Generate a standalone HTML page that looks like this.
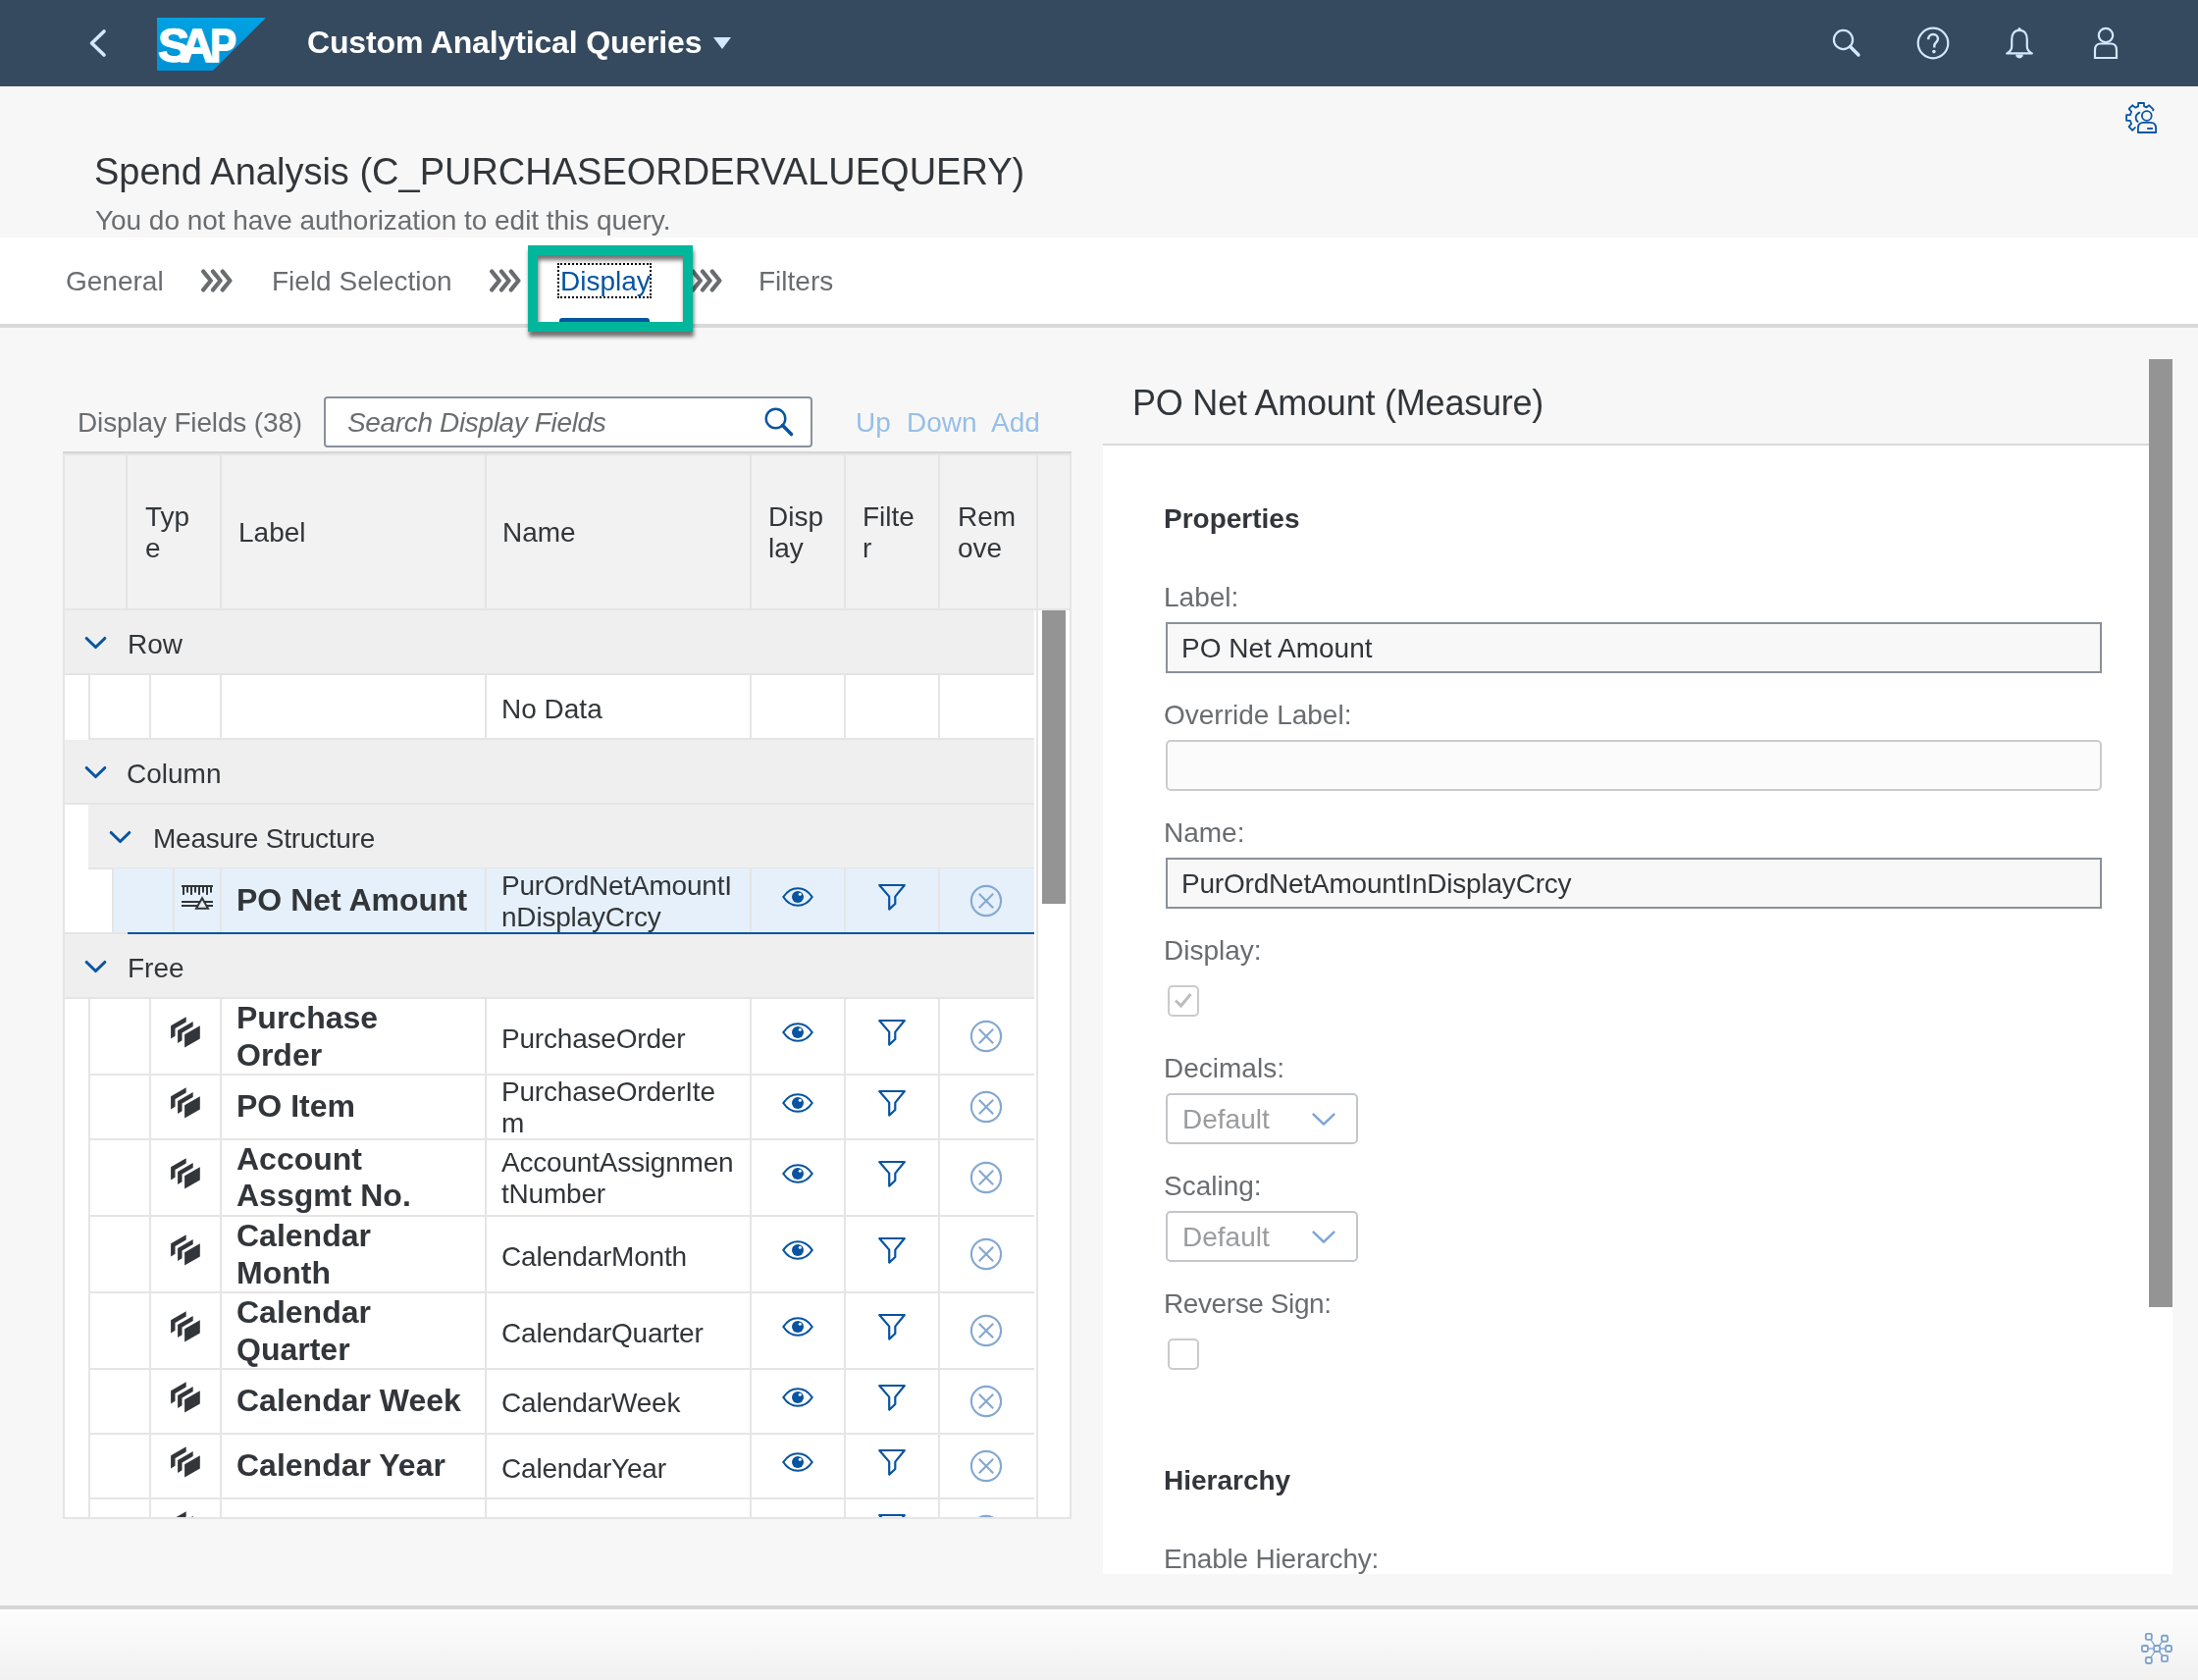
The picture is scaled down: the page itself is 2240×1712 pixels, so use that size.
<!DOCTYPE html><html><head><meta charset="utf-8"><style>
html,body{margin:0;padding:0;}
body{width:2240px;height:1712px;position:relative;overflow:hidden;background:#f7f7f7;font-family:"Liberation Sans",sans-serif;-webkit-font-smoothing:antialiased;}
.t{position:absolute;white-space:nowrap;will-change:transform;}
.b{position:absolute;}
</style></head><body>
<div class="b" style="left:0px;top:0px;width:2240px;height:88px;background:#354a5f"></div>
<svg class="b" style="left:88px;top:26px;" width="24" height="36" viewBox="0 0 24 36"><polyline points="18,6 5.5,18 18,30" fill="none" stroke="#d1e8ff" stroke-width="3.6" stroke-linecap="round" stroke-linejoin="round"/></svg>
<svg class="b" style="left:160px;top:18px;" width="111" height="54" viewBox="0 0 111 54"><defs><linearGradient id="sg" x1="0" y1="0" x2="0" y2="1"><stop offset="0" stop-color="#00a2e3"/><stop offset="1" stop-color="#0091d4"/></linearGradient></defs><polygon points="0,0 111,0 57,54 0,54" fill="url(#sg)"/><g font-family="Liberation Sans" font-weight="bold" font-size="48" fill="#fff" stroke="#fff" stroke-width="1.4"><text x="1" y="44.5">S</text><text x="23.5" y="44.5">A</text><text x="54" y="44.5" textLength="27" lengthAdjust="spacingAndGlyphs">P</text></g></svg>
<div class="t" style="left:313px;top:27px;font-size:32px;line-height:32px;color:#ffffff;font-weight:bold;font-style:normal;letter-spacing:-0.15px">Custom Analytical Queries</div>
<svg class="b" style="left:727px;top:38px;" width="18" height="12" viewBox="0 0 18 12"><polygon points="0,0 18,0 9,12" fill="#d1e8ff"/></svg>
<svg class="b" style="left:1866px;top:28px;" width="32" height="32" viewBox="0 0 32 32"><circle cx="12.5" cy="12.5" r="9.6" fill="none" stroke="#d1e8ff" stroke-width="2.2"/><line x1="19.5" y1="19.5" x2="28" y2="28" stroke="#d1e8ff" stroke-width="3.4" stroke-linecap="round"/></svg>
<svg class="b" style="left:1953px;top:27px;" width="34" height="34" viewBox="0 0 34 34"><circle cx="17" cy="17" r="15.3" fill="none" stroke="#d1e8ff" stroke-width="2.2"/><path d="M12.2,13.2 C12.2,9.8 14.5,8 17.1,8 C19.9,8 22,9.9 22,12.6 C22,15.6 18.3,16.6 18.3,19.6 L18.3,21.5" fill="none" stroke="#d1e8ff" stroke-width="2.4"/><circle cx="17.9" cy="25.6" r="1.8" fill="#d1e8ff"/></svg>
<svg class="b" style="left:2042px;top:27px;" width="32" height="34" viewBox="0 0 32 34"><path d="M16,3.8 C10.5,3.8 8.2,8.2 8.2,13.2 L8.2,20.5 C8.2,23.5 6.5,25.6 3.2,27.4 L28.8,27.4 C25.5,25.6 23.8,23.5 23.8,20.5 L23.8,13.2 C23.8,8.2 21.5,3.8 16,3.8 Z" fill="none" stroke="#d1e8ff" stroke-width="2.2" stroke-linejoin="round"/><circle cx="16" cy="2.6" r="1.6" fill="#d1e8ff"/><path d="M12.2,28.6 A3.8,3.8 0 0 0 19.8,28.6 Z" fill="#d1e8ff"/></svg>
<svg class="b" style="left:2132px;top:27px;" width="28" height="34" viewBox="0 0 28 34"><circle cx="14" cy="9" r="7.2" fill="none" stroke="#d1e8ff" stroke-width="2.2"/><path d="M3,32 L3,24 C3,19.5 5.5,17.5 9,17.5 L19,17.5 C22.5,17.5 25,19.5 25,24 L25,32 Z" fill="none" stroke="#d1e8ff" stroke-width="2.2"/></svg>
<svg class="b" style="left:2164px;top:102px;" width="36" height="36" viewBox="0 0 36 36"><g fill="none" stroke="#0854a0" stroke-width="1.8" stroke-linejoin="round" stroke-linecap="round"><path d="M11.9,28 L9.2,30.8 L5.6,27.1 L8.1,24.2 L6.9,20.8 L3.1,20.8 L3.1,15.1 L6.9,15.1 L8.1,11.8 L5.6,8.9 L9.2,5.3 L12.1,7.6 L15.1,6.3 L15.1,3 L21,3 L21,6.3 L23.6,7.3 L26.2,5.3 L30.6,9.6 L30.2,10.5"/><path d="M16.4,12.6 C13.8,14 12.6,16.2 12.6,18 C12.6,19.6 13.4,21 14.6,22"/><circle cx="23.8" cy="16" r="4.9"/><path d="M14.9,33 L14.9,28.5 C14.9,25 16.6,22.8 20.5,22.8 L27.5,22.8 C31.4,22.8 33.1,25 33.1,28.5 L33.1,33 Z"/></g><rect x="24.2" y="28" width="5.7" height="1.9" fill="#0854a0"/></svg>
<div class="t" style="left:96px;top:156px;font-size:38px;line-height:38px;color:#32363a;font-weight:normal;font-style:normal;">Spend Analysis (C_PURCHASEORDERVALUEQUERY)</div>
<div class="t" style="left:97px;top:211px;font-size:28px;line-height:28px;color:#6a6d70;font-weight:normal;font-style:normal;letter-spacing:-0.04px">You do not have authorization to edit this query.</div>
<div class="b" style="left:0px;top:242px;width:2240px;height:88px;background:#ffffff"></div>
<div class="b" style="left:0px;top:330px;width:2240px;height:4px;background:#d9d9d9"></div>
<div class="t" style="left:67px;top:273px;font-size:28px;line-height:28px;color:#6a6d70;font-weight:normal;font-style:normal;">General</div>
<div class="t" style="left:277px;top:273px;font-size:28px;line-height:28px;color:#6a6d70;font-weight:normal;font-style:normal;">Field Selection</div>
<div class="t" style="left:571px;top:273px;font-size:28px;line-height:28px;color:#0854a0;font-weight:normal;font-style:normal;">Display</div>
<div class="t" style="left:773px;top:273px;font-size:28px;line-height:28px;color:#6a6d70;font-weight:normal;font-style:normal;">Filters</div>
<svg class="b" style="left:204px;top:274px;" width="34" height="24" viewBox="0 0 34 24"><polyline points="3.2,2.6 10.8,12 3.2,21.4" fill="none" stroke="#6a6d70" stroke-width="4.3" stroke-linecap="round" stroke-linejoin="round"/><polyline points="13.0,2.6 20.6,12 13.0,21.4" fill="none" stroke="#6a6d70" stroke-width="4.3" stroke-linecap="round" stroke-linejoin="round"/><polyline points="22.8,2.6 30.400000000000002,12 22.8,21.4" fill="none" stroke="#6a6d70" stroke-width="4.3" stroke-linecap="round" stroke-linejoin="round"/></svg>
<svg class="b" style="left:498px;top:274px;" width="34" height="24" viewBox="0 0 34 24"><polyline points="3.2,2.6 10.8,12 3.2,21.4" fill="none" stroke="#6a6d70" stroke-width="4.3" stroke-linecap="round" stroke-linejoin="round"/><polyline points="13.0,2.6 20.6,12 13.0,21.4" fill="none" stroke="#6a6d70" stroke-width="4.3" stroke-linecap="round" stroke-linejoin="round"/><polyline points="22.8,2.6 30.400000000000002,12 22.8,21.4" fill="none" stroke="#6a6d70" stroke-width="4.3" stroke-linecap="round" stroke-linejoin="round"/></svg>
<svg class="b" style="left:703px;top:274px;" width="34" height="24" viewBox="0 0 34 24"><polyline points="3.2,2.6 10.8,12 3.2,21.4" fill="none" stroke="#6a6d70" stroke-width="4.3" stroke-linecap="round" stroke-linejoin="round"/><polyline points="13.0,2.6 20.6,12 13.0,21.4" fill="none" stroke="#6a6d70" stroke-width="4.3" stroke-linecap="round" stroke-linejoin="round"/><polyline points="22.8,2.6 30.400000000000002,12 22.8,21.4" fill="none" stroke="#6a6d70" stroke-width="4.3" stroke-linecap="round" stroke-linejoin="round"/></svg>
<div class="b" style="left:570px;top:324px;width:92px;height:6px;background:#0854a0;border-radius:3px 3px 0 0"></div>
<div class="b" style="left:568px;top:268px;width:96px;height:36px;border:2px dotted #000;box-sizing:border-box"></div>
<div class="b" style="left:538px;top:250px;width:168px;height:88px;border:10px solid #00b79b;box-sizing:border-box;box-shadow:1px 5px 4px rgba(0,0,0,0.55), inset 1px 5px 4px rgba(0,0,0,0.55)"></div>
<div class="t" style="left:79px;top:417px;font-size:28px;line-height:28px;color:#6a6d70;font-weight:normal;font-style:normal;letter-spacing:-0.15px">Display Fields (38)</div>
<div class="b" style="left:330px;top:404px;width:498px;height:52px;background:#fff;border:2px solid #89919a;border-radius:4px;box-sizing:border-box"></div>
<div class="t" style="left:354px;top:417px;font-size:28px;line-height:28px;color:#6a6d70;font-weight:normal;font-style:italic;letter-spacing:-0.35px">Search Display Fields</div>
<svg class="b" style="left:778px;top:414px;" width="32" height="32" viewBox="0 0 32 32"><circle cx="12.5" cy="12.5" r="9.8" fill="none" stroke="#0854a0" stroke-width="2.4"/><line x1="19.6" y1="19.6" x2="28.5" y2="28.5" stroke="#0854a0" stroke-width="3.6" stroke-linecap="round"/></svg>
<div class="t" style="left:872px;top:417px;font-size:28px;line-height:28px;color:#97bfe7;font-weight:normal;font-style:normal;">Up</div>
<div class="t" style="left:924px;top:417px;font-size:28px;line-height:28px;color:#97bfe7;font-weight:normal;font-style:normal;">Down</div>
<div class="t" style="left:1010px;top:417px;font-size:28px;line-height:28px;color:#97bfe7;font-weight:normal;font-style:normal;">Add</div>
<div class="b" style="left:64px;top:460px;width:1028px;height:1088px;background:#fff"></div>
<div class="b" style="left:64px;top:460px;width:2px;height:1088px;background:#e5e5e5"></div>
<div class="b" style="left:1090px;top:460px;width:2px;height:1088px;background:#e5e5e5"></div>
<div class="b" style="left:64px;top:460px;width:1028px;height:2px;background:#d6d6d6"></div>
<div class="b" style="left:66px;top:462px;width:1024px;height:2px;background:#e5e5e5"></div>
<div class="b" style="left:64px;top:1546px;width:1028px;height:2px;background:#e5e5e5"></div>
<div class="b" style="left:66px;top:464px;width:1024px;height:156px;background:#f2f2f2"></div>
<div class="b" style="left:66px;top:620px;width:1024px;height:2px;background:#e5e5e5"></div>
<div class="b" style="left:128px;top:464px;width:2px;height:156px;background:#e5e5e5"></div>
<div class="b" style="left:224px;top:464px;width:2px;height:156px;background:#e5e5e5"></div>
<div class="b" style="left:494px;top:464px;width:2px;height:156px;background:#e5e5e5"></div>
<div class="b" style="left:764px;top:464px;width:2px;height:156px;background:#e5e5e5"></div>
<div class="b" style="left:860px;top:464px;width:2px;height:156px;background:#e5e5e5"></div>
<div class="b" style="left:956px;top:464px;width:2px;height:156px;background:#e5e5e5"></div>
<div class="b" style="left:1056px;top:464px;width:2px;height:156px;background:#e5e5e5"></div>
<div class="t" style="left:148px;top:513px;font-size:28px;line-height:28px;color:#32363a;font-weight:normal;font-style:normal;">Typ</div>
<div class="t" style="left:148px;top:545px;font-size:28px;line-height:28px;color:#32363a;font-weight:normal;font-style:normal;">e</div>
<div class="t" style="left:243px;top:529px;font-size:28px;line-height:28px;color:#32363a;font-weight:normal;font-style:normal;">Label</div>
<div class="t" style="left:512px;top:529px;font-size:28px;line-height:28px;color:#32363a;font-weight:normal;font-style:normal;">Name</div>
<div class="t" style="left:783px;top:513px;font-size:28px;line-height:28px;color:#32363a;font-weight:normal;font-style:normal;">Disp</div>
<div class="t" style="left:783px;top:545px;font-size:28px;line-height:28px;color:#32363a;font-weight:normal;font-style:normal;">lay</div>
<div class="t" style="left:879px;top:513px;font-size:28px;line-height:28px;color:#32363a;font-weight:normal;font-style:normal;">Filte</div>
<div class="t" style="left:879px;top:545px;font-size:28px;line-height:28px;color:#32363a;font-weight:normal;font-style:normal;">r</div>
<div class="t" style="left:976px;top:513px;font-size:28px;line-height:28px;color:#32363a;font-weight:normal;font-style:normal;">Rem</div>
<div class="t" style="left:976px;top:545px;font-size:28px;line-height:28px;color:#32363a;font-weight:normal;font-style:normal;">ove</div>
<div class="b" style="left:66px;top:622px;width:1024px;height:924px;overflow:hidden;background:#fff">
<div class="b" style="left:0px;top:0px;width:988px;height:64px;background:#efefef"></div>
<div class="b" style="left:0px;top:64px;width:988px;height:2px;background:#e5e5e5"></div>
<svg class="b" style="left:20px;top:26px;" width="24" height="16" viewBox="0 0 24 16"><polyline points="2.2,2.5 11.5,11.5 20.8,2.5" fill="none" stroke="#0854a0" stroke-width="3.1" stroke-linecap="round" stroke-linejoin="round"/></svg>
<div class="t" style="left:64px;top:21px;font-size:28px;line-height:28px;color:#32363a;font-weight:normal;font-style:normal;">Row</div>
<div class="b" style="left:24px;top:130px;width:964px;height:2px;background:#e5e5e5"></div>
<div class="b" style="left:24px;top:66px;width:2px;height:66px;background:#e5e5e5"></div>
<div class="b" style="left:86px;top:66px;width:2px;height:66px;background:#e5e5e5"></div>
<div class="b" style="left:158px;top:66px;width:2px;height:66px;background:#e5e5e5"></div>
<div class="b" style="left:428px;top:66px;width:2px;height:66px;background:#e5e5e5"></div>
<div class="b" style="left:698px;top:66px;width:2px;height:66px;background:#e5e5e5"></div>
<div class="b" style="left:794px;top:66px;width:2px;height:66px;background:#e5e5e5"></div>
<div class="b" style="left:890px;top:66px;width:2px;height:66px;background:#e5e5e5"></div>
<div class="t" style="left:445px;top:87px;font-size:28px;line-height:28px;color:#32363a;font-weight:normal;font-style:normal;">No Data</div>
<div class="b" style="left:0px;top:132px;width:988px;height:64px;background:#efefef"></div>
<div class="b" style="left:0px;top:196px;width:988px;height:2px;background:#e5e5e5"></div>
<svg class="b" style="left:20px;top:158px;" width="24" height="16" viewBox="0 0 24 16"><polyline points="2.2,2.5 11.5,11.5 20.8,2.5" fill="none" stroke="#0854a0" stroke-width="3.1" stroke-linecap="round" stroke-linejoin="round"/></svg>
<div class="t" style="left:63px;top:153px;font-size:28px;line-height:28px;color:#32363a;font-weight:normal;font-style:normal;">Column</div>
<div class="b" style="left:24px;top:198px;width:964px;height:64px;background:#efefef"></div>
<div class="b" style="left:24px;top:262px;width:964px;height:2px;background:#e5e5e5"></div>
<svg class="b" style="left:45px;top:224px;" width="24" height="16" viewBox="0 0 24 16"><polyline points="2.2,2.5 11.5,11.5 20.8,2.5" fill="none" stroke="#0854a0" stroke-width="3.1" stroke-linecap="round" stroke-linejoin="round"/></svg>
<div class="t" style="left:90px;top:219px;font-size:28px;line-height:28px;color:#32363a;font-weight:normal;font-style:normal;letter-spacing:-0.25px">Measure Structure</div>
<div class="b" style="left:48px;top:263px;width:940px;height:65px;background:#e5f0fa"></div>
<div class="b" style="left:48px;top:263px;width:2px;height:65px;background:#e5e5e5"></div>
<div class="b" style="left:0px;top:328px;width:64px;height:2px;background:#e5e5e5"></div>
<div class="b" style="left:110px;top:263px;width:2px;height:65px;background:#e5e5e5"></div>
<div class="b" style="left:158px;top:263px;width:2px;height:65px;background:#e5e5e5"></div>
<div class="b" style="left:428px;top:263px;width:2px;height:65px;background:#e5e5e5"></div>
<div class="b" style="left:698px;top:263px;width:2px;height:65px;background:#e5e5e5"></div>
<div class="b" style="left:794px;top:263px;width:2px;height:65px;background:#e5e5e5"></div>
<div class="b" style="left:890px;top:263px;width:2px;height:65px;background:#e5e5e5"></div>
<div class="b" style="left:64px;top:328px;width:924px;height:2px;background:#0854a0"></div>
<svg class="b" style="left:119px;top:280px;" width="32" height="26" viewBox="0 0 32 26"><rect x="0" y="0" width="32" height="2" fill="#32363a"/><rect x="1" y="0" width="2" height="9.9" fill="#32363a"/><rect x="5" y="0" width="2" height="7.6" fill="#32363a"/><rect x="9" y="0" width="2" height="9.9" fill="#32363a"/><rect x="13" y="0" width="2" height="7.6" fill="#32363a"/><rect x="17" y="0" width="2" height="9.9" fill="#32363a"/><rect x="21" y="0" width="2" height="7.6" fill="#32363a"/><rect x="25" y="0" width="2" height="9.9" fill="#32363a"/><rect x="29" y="0" width="2" height="7.6" fill="#32363a"/><rect x="0" y="16" width="32" height="2" fill="#32363a"/><rect x="0" y="20" width="32" height="2" fill="#32363a"/><polygon points="21,13.2 15,23.8 27,23.8" fill="#e5f0fa" stroke="#32363a" stroke-width="2" stroke-linejoin="miter"/></svg>
<div class="t" style="left:175px;top:279px;font-size:32px;line-height:32px;color:#32363a;font-weight:bold;font-style:normal;">PO Net Amount</div>
<div class="t" style="left:445px;top:267px;font-size:28px;line-height:28px;color:#32363a;font-weight:normal;font-style:normal;letter-spacing:-0.2px">PurOrdNetAmountI</div>
<div class="t" style="left:445px;top:299px;font-size:28px;line-height:28px;color:#32363a;font-weight:normal;font-style:normal;letter-spacing:-0.2px">nDisplayCrcy</div>
<svg class="b" style="left:730px;top:280px;" width="34" height="24" viewBox="0 0 34 24"><path d="M2.3,12 C6.5,5.6 11.3,3.2 17,3.2 C22.7,3.2 27.5,5.6 31.7,12 C27.5,18.4 22.7,20.8 17,20.8 C11.3,20.8 6.5,18.4 2.3,12 Z" fill="none" stroke="#0854a0" stroke-width="2.1"/><circle cx="17" cy="12" r="6" fill="#0854a0"/><circle cx="19.3" cy="9.2" r="1.5" fill="#fff"/></svg>
<svg class="b" style="left:828px;top:278px;" width="30" height="30" viewBox="0 0 30 30"><path d="M2.2,2 L27.8,2 L18.3,13.6 L18.3,21 L12.2,26.6 L12.2,13.6 Z" fill="none" stroke="#0854a0" stroke-width="2.2" stroke-linejoin="round"/></svg>
<svg class="b" style="left:922px;top:279px;" width="34" height="34" viewBox="0 0 34 34"><circle cx="17" cy="17" r="15.1" fill="none" stroke="#84a8d2" stroke-width="2.1"/><path d="M9.8,9.8 L24.2,24.2 M24.2,9.8 L9.8,24.2" stroke="#84a8d2" stroke-width="2.1"/></svg>
<div class="b" style="left:0px;top:330px;width:988px;height:64px;background:#efefef"></div>
<div class="b" style="left:0px;top:394px;width:988px;height:2px;background:#e5e5e5"></div>
<svg class="b" style="left:20px;top:356px;" width="24" height="16" viewBox="0 0 24 16"><polyline points="2.2,2.5 11.5,11.5 20.8,2.5" fill="none" stroke="#0854a0" stroke-width="3.1" stroke-linecap="round" stroke-linejoin="round"/></svg>
<div class="t" style="left:64px;top:351px;font-size:28px;line-height:28px;color:#32363a;font-weight:normal;font-style:normal;">Free</div>
<div class="b" style="left:24px;top:472px;width:964px;height:2px;background:#e5e5e5"></div>
<div class="b" style="left:24px;top:396px;width:2px;height:78px;background:#e5e5e5"></div>
<div class="b" style="left:86px;top:396px;width:2px;height:78px;background:#e5e5e5"></div>
<div class="b" style="left:158px;top:396px;width:2px;height:78px;background:#e5e5e5"></div>
<div class="b" style="left:428px;top:396px;width:2px;height:78px;background:#e5e5e5"></div>
<div class="b" style="left:698px;top:396px;width:2px;height:78px;background:#e5e5e5"></div>
<div class="b" style="left:794px;top:396px;width:2px;height:78px;background:#e5e5e5"></div>
<div class="b" style="left:890px;top:396px;width:2px;height:78px;background:#e5e5e5"></div>
<svg class="b" style="left:99px;top:402.5999999999999px;" width="50" height="50" viewBox="0 0 50 50"><polygon points="9.1,20.2 24.7,11.2 24.7,16.5 13.5,22.9 13.5,30.7 9.1,33.6" fill="#32363a"/><polygon points="16.1,25 31.7,15.9 31.7,21 20.5,27.4 20.5,35.3 16.1,38" fill="#32363a"/><polygon points="23.1,29.3 38.8,20.2 38.8,33.5 23.1,42.6" fill="#32363a"/></svg>
<div class="t" style="left:175px;top:399px;font-size:32px;line-height:32px;color:#32363a;font-weight:bold;font-style:normal;">Purchase</div>
<div class="t" style="left:175px;top:437px;font-size:32px;line-height:32px;color:#32363a;font-weight:bold;font-style:normal;">Order</div>
<div class="t" style="left:445px;top:423px;font-size:28px;line-height:28px;color:#32363a;font-weight:normal;font-style:normal;letter-spacing:-0.2px">PurchaseOrder</div>
<svg class="b" style="left:730px;top:418px;" width="34" height="24" viewBox="0 0 34 24"><path d="M2.3,12 C6.5,5.6 11.3,3.2 17,3.2 C22.7,3.2 27.5,5.6 31.7,12 C27.5,18.4 22.7,20.8 17,20.8 C11.3,20.8 6.5,18.4 2.3,12 Z" fill="none" stroke="#0854a0" stroke-width="2.1"/><circle cx="17" cy="12" r="6" fill="#0854a0"/><circle cx="19.3" cy="9.2" r="1.5" fill="#fff"/></svg>
<svg class="b" style="left:828px;top:416px;" width="30" height="30" viewBox="0 0 30 30"><path d="M2.2,2 L27.8,2 L18.3,13.6 L18.3,21 L12.2,26.6 L12.2,13.6 Z" fill="none" stroke="#0854a0" stroke-width="2.2" stroke-linejoin="round"/></svg>
<svg class="b" style="left:922px;top:417px;" width="34" height="34" viewBox="0 0 34 34"><circle cx="17" cy="17" r="15.1" fill="none" stroke="#84a8d2" stroke-width="2.1"/><path d="M9.8,9.8 L24.2,24.2 M24.2,9.8 L9.8,24.2" stroke="#84a8d2" stroke-width="2.1"/></svg>
<div class="b" style="left:24px;top:538px;width:964px;height:2px;background:#e5e5e5"></div>
<div class="b" style="left:24px;top:474px;width:2px;height:66px;background:#e5e5e5"></div>
<div class="b" style="left:86px;top:474px;width:2px;height:66px;background:#e5e5e5"></div>
<div class="b" style="left:158px;top:474px;width:2px;height:66px;background:#e5e5e5"></div>
<div class="b" style="left:428px;top:474px;width:2px;height:66px;background:#e5e5e5"></div>
<div class="b" style="left:698px;top:474px;width:2px;height:66px;background:#e5e5e5"></div>
<div class="b" style="left:794px;top:474px;width:2px;height:66px;background:#e5e5e5"></div>
<div class="b" style="left:890px;top:474px;width:2px;height:66px;background:#e5e5e5"></div>
<svg class="b" style="left:99px;top:474.5999999999999px;" width="50" height="50" viewBox="0 0 50 50"><polygon points="9.1,20.2 24.7,11.2 24.7,16.5 13.5,22.9 13.5,30.7 9.1,33.6" fill="#32363a"/><polygon points="16.1,25 31.7,15.9 31.7,21 20.5,27.4 20.5,35.3 16.1,38" fill="#32363a"/><polygon points="23.1,29.3 38.8,20.2 38.8,33.5 23.1,42.6" fill="#32363a"/></svg>
<div class="t" style="left:175px;top:489px;font-size:32px;line-height:32px;color:#32363a;font-weight:bold;font-style:normal;">PO Item</div>
<div class="t" style="left:445px;top:477px;font-size:28px;line-height:28px;color:#32363a;font-weight:normal;font-style:normal;letter-spacing:-0.2px">PurchaseOrderIte</div>
<div class="t" style="left:445px;top:509px;font-size:28px;line-height:28px;color:#32363a;font-weight:normal;font-style:normal;letter-spacing:-0.2px">m</div>
<svg class="b" style="left:730px;top:490px;" width="34" height="24" viewBox="0 0 34 24"><path d="M2.3,12 C6.5,5.6 11.3,3.2 17,3.2 C22.7,3.2 27.5,5.6 31.7,12 C27.5,18.4 22.7,20.8 17,20.8 C11.3,20.8 6.5,18.4 2.3,12 Z" fill="none" stroke="#0854a0" stroke-width="2.1"/><circle cx="17" cy="12" r="6" fill="#0854a0"/><circle cx="19.3" cy="9.2" r="1.5" fill="#fff"/></svg>
<svg class="b" style="left:828px;top:488px;" width="30" height="30" viewBox="0 0 30 30"><path d="M2.2,2 L27.8,2 L18.3,13.6 L18.3,21 L12.2,26.6 L12.2,13.6 Z" fill="none" stroke="#0854a0" stroke-width="2.2" stroke-linejoin="round"/></svg>
<svg class="b" style="left:922px;top:489px;" width="34" height="34" viewBox="0 0 34 34"><circle cx="17" cy="17" r="15.1" fill="none" stroke="#84a8d2" stroke-width="2.1"/><path d="M9.8,9.8 L24.2,24.2 M24.2,9.8 L9.8,24.2" stroke="#84a8d2" stroke-width="2.1"/></svg>
<div class="b" style="left:24px;top:616px;width:964px;height:2px;background:#e5e5e5"></div>
<div class="b" style="left:24px;top:540px;width:2px;height:78px;background:#e5e5e5"></div>
<div class="b" style="left:86px;top:540px;width:2px;height:78px;background:#e5e5e5"></div>
<div class="b" style="left:158px;top:540px;width:2px;height:78px;background:#e5e5e5"></div>
<div class="b" style="left:428px;top:540px;width:2px;height:78px;background:#e5e5e5"></div>
<div class="b" style="left:698px;top:540px;width:2px;height:78px;background:#e5e5e5"></div>
<div class="b" style="left:794px;top:540px;width:2px;height:78px;background:#e5e5e5"></div>
<div class="b" style="left:890px;top:540px;width:2px;height:78px;background:#e5e5e5"></div>
<svg class="b" style="left:99px;top:546.5999999999999px;" width="50" height="50" viewBox="0 0 50 50"><polygon points="9.1,20.2 24.7,11.2 24.7,16.5 13.5,22.9 13.5,30.7 9.1,33.6" fill="#32363a"/><polygon points="16.1,25 31.7,15.9 31.7,21 20.5,27.4 20.5,35.3 16.1,38" fill="#32363a"/><polygon points="23.1,29.3 38.8,20.2 38.8,33.5 23.1,42.6" fill="#32363a"/></svg>
<div class="t" style="left:175px;top:543px;font-size:32px;line-height:32px;color:#32363a;font-weight:bold;font-style:normal;">Account</div>
<div class="t" style="left:175px;top:580px;font-size:32px;line-height:32px;color:#32363a;font-weight:bold;font-style:normal;">Assgmt No.</div>
<div class="t" style="left:445px;top:549px;font-size:28px;line-height:28px;color:#32363a;font-weight:normal;font-style:normal;letter-spacing:-0.2px">AccountAssignmen</div>
<div class="t" style="left:445px;top:581px;font-size:28px;line-height:28px;color:#32363a;font-weight:normal;font-style:normal;letter-spacing:-0.2px">tNumber</div>
<svg class="b" style="left:730px;top:562px;" width="34" height="24" viewBox="0 0 34 24"><path d="M2.3,12 C6.5,5.6 11.3,3.2 17,3.2 C22.7,3.2 27.5,5.6 31.7,12 C27.5,18.4 22.7,20.8 17,20.8 C11.3,20.8 6.5,18.4 2.3,12 Z" fill="none" stroke="#0854a0" stroke-width="2.1"/><circle cx="17" cy="12" r="6" fill="#0854a0"/><circle cx="19.3" cy="9.2" r="1.5" fill="#fff"/></svg>
<svg class="b" style="left:828px;top:560px;" width="30" height="30" viewBox="0 0 30 30"><path d="M2.2,2 L27.8,2 L18.3,13.6 L18.3,21 L12.2,26.6 L12.2,13.6 Z" fill="none" stroke="#0854a0" stroke-width="2.2" stroke-linejoin="round"/></svg>
<svg class="b" style="left:922px;top:561px;" width="34" height="34" viewBox="0 0 34 34"><circle cx="17" cy="17" r="15.1" fill="none" stroke="#84a8d2" stroke-width="2.1"/><path d="M9.8,9.8 L24.2,24.2 M24.2,9.8 L9.8,24.2" stroke="#84a8d2" stroke-width="2.1"/></svg>
<div class="b" style="left:24px;top:694px;width:964px;height:2px;background:#e5e5e5"></div>
<div class="b" style="left:24px;top:618px;width:2px;height:78px;background:#e5e5e5"></div>
<div class="b" style="left:86px;top:618px;width:2px;height:78px;background:#e5e5e5"></div>
<div class="b" style="left:158px;top:618px;width:2px;height:78px;background:#e5e5e5"></div>
<div class="b" style="left:428px;top:618px;width:2px;height:78px;background:#e5e5e5"></div>
<div class="b" style="left:698px;top:618px;width:2px;height:78px;background:#e5e5e5"></div>
<div class="b" style="left:794px;top:618px;width:2px;height:78px;background:#e5e5e5"></div>
<div class="b" style="left:890px;top:618px;width:2px;height:78px;background:#e5e5e5"></div>
<svg class="b" style="left:99px;top:624.5999999999999px;" width="50" height="50" viewBox="0 0 50 50"><polygon points="9.1,20.2 24.7,11.2 24.7,16.5 13.5,22.9 13.5,30.7 9.1,33.6" fill="#32363a"/><polygon points="16.1,25 31.7,15.9 31.7,21 20.5,27.4 20.5,35.3 16.1,38" fill="#32363a"/><polygon points="23.1,29.3 38.8,20.2 38.8,33.5 23.1,42.6" fill="#32363a"/></svg>
<div class="t" style="left:175px;top:621px;font-size:32px;line-height:32px;color:#32363a;font-weight:bold;font-style:normal;">Calendar</div>
<div class="t" style="left:175px;top:659px;font-size:32px;line-height:32px;color:#32363a;font-weight:bold;font-style:normal;">Month</div>
<div class="t" style="left:445px;top:645px;font-size:28px;line-height:28px;color:#32363a;font-weight:normal;font-style:normal;letter-spacing:-0.2px">CalendarMonth</div>
<svg class="b" style="left:730px;top:640px;" width="34" height="24" viewBox="0 0 34 24"><path d="M2.3,12 C6.5,5.6 11.3,3.2 17,3.2 C22.7,3.2 27.5,5.6 31.7,12 C27.5,18.4 22.7,20.8 17,20.8 C11.3,20.8 6.5,18.4 2.3,12 Z" fill="none" stroke="#0854a0" stroke-width="2.1"/><circle cx="17" cy="12" r="6" fill="#0854a0"/><circle cx="19.3" cy="9.2" r="1.5" fill="#fff"/></svg>
<svg class="b" style="left:828px;top:638px;" width="30" height="30" viewBox="0 0 30 30"><path d="M2.2,2 L27.8,2 L18.3,13.6 L18.3,21 L12.2,26.6 L12.2,13.6 Z" fill="none" stroke="#0854a0" stroke-width="2.2" stroke-linejoin="round"/></svg>
<svg class="b" style="left:922px;top:639px;" width="34" height="34" viewBox="0 0 34 34"><circle cx="17" cy="17" r="15.1" fill="none" stroke="#84a8d2" stroke-width="2.1"/><path d="M9.8,9.8 L24.2,24.2 M24.2,9.8 L9.8,24.2" stroke="#84a8d2" stroke-width="2.1"/></svg>
<div class="b" style="left:24px;top:772px;width:964px;height:2px;background:#e5e5e5"></div>
<div class="b" style="left:24px;top:696px;width:2px;height:78px;background:#e5e5e5"></div>
<div class="b" style="left:86px;top:696px;width:2px;height:78px;background:#e5e5e5"></div>
<div class="b" style="left:158px;top:696px;width:2px;height:78px;background:#e5e5e5"></div>
<div class="b" style="left:428px;top:696px;width:2px;height:78px;background:#e5e5e5"></div>
<div class="b" style="left:698px;top:696px;width:2px;height:78px;background:#e5e5e5"></div>
<div class="b" style="left:794px;top:696px;width:2px;height:78px;background:#e5e5e5"></div>
<div class="b" style="left:890px;top:696px;width:2px;height:78px;background:#e5e5e5"></div>
<svg class="b" style="left:99px;top:702.5999999999999px;" width="50" height="50" viewBox="0 0 50 50"><polygon points="9.1,20.2 24.7,11.2 24.7,16.5 13.5,22.9 13.5,30.7 9.1,33.6" fill="#32363a"/><polygon points="16.1,25 31.7,15.9 31.7,21 20.5,27.4 20.5,35.3 16.1,38" fill="#32363a"/><polygon points="23.1,29.3 38.8,20.2 38.8,33.5 23.1,42.6" fill="#32363a"/></svg>
<div class="t" style="left:175px;top:699px;font-size:32px;line-height:32px;color:#32363a;font-weight:bold;font-style:normal;">Calendar</div>
<div class="t" style="left:175px;top:737px;font-size:32px;line-height:32px;color:#32363a;font-weight:bold;font-style:normal;">Quarter</div>
<div class="t" style="left:445px;top:723px;font-size:28px;line-height:28px;color:#32363a;font-weight:normal;font-style:normal;letter-spacing:-0.2px">CalendarQuarter</div>
<svg class="b" style="left:730px;top:718px;" width="34" height="24" viewBox="0 0 34 24"><path d="M2.3,12 C6.5,5.6 11.3,3.2 17,3.2 C22.7,3.2 27.5,5.6 31.7,12 C27.5,18.4 22.7,20.8 17,20.8 C11.3,20.8 6.5,18.4 2.3,12 Z" fill="none" stroke="#0854a0" stroke-width="2.1"/><circle cx="17" cy="12" r="6" fill="#0854a0"/><circle cx="19.3" cy="9.2" r="1.5" fill="#fff"/></svg>
<svg class="b" style="left:828px;top:716px;" width="30" height="30" viewBox="0 0 30 30"><path d="M2.2,2 L27.8,2 L18.3,13.6 L18.3,21 L12.2,26.6 L12.2,13.6 Z" fill="none" stroke="#0854a0" stroke-width="2.2" stroke-linejoin="round"/></svg>
<svg class="b" style="left:922px;top:717px;" width="34" height="34" viewBox="0 0 34 34"><circle cx="17" cy="17" r="15.1" fill="none" stroke="#84a8d2" stroke-width="2.1"/><path d="M9.8,9.8 L24.2,24.2 M24.2,9.8 L9.8,24.2" stroke="#84a8d2" stroke-width="2.1"/></svg>
<div class="b" style="left:24px;top:838px;width:964px;height:2px;background:#e5e5e5"></div>
<div class="b" style="left:24px;top:774px;width:2px;height:66px;background:#e5e5e5"></div>
<div class="b" style="left:86px;top:774px;width:2px;height:66px;background:#e5e5e5"></div>
<div class="b" style="left:158px;top:774px;width:2px;height:66px;background:#e5e5e5"></div>
<div class="b" style="left:428px;top:774px;width:2px;height:66px;background:#e5e5e5"></div>
<div class="b" style="left:698px;top:774px;width:2px;height:66px;background:#e5e5e5"></div>
<div class="b" style="left:794px;top:774px;width:2px;height:66px;background:#e5e5e5"></div>
<div class="b" style="left:890px;top:774px;width:2px;height:66px;background:#e5e5e5"></div>
<svg class="b" style="left:99px;top:774.5999999999999px;" width="50" height="50" viewBox="0 0 50 50"><polygon points="9.1,20.2 24.7,11.2 24.7,16.5 13.5,22.9 13.5,30.7 9.1,33.6" fill="#32363a"/><polygon points="16.1,25 31.7,15.9 31.7,21 20.5,27.4 20.5,35.3 16.1,38" fill="#32363a"/><polygon points="23.1,29.3 38.8,20.2 38.8,33.5 23.1,42.6" fill="#32363a"/></svg>
<div class="t" style="left:175px;top:789px;font-size:32px;line-height:32px;color:#32363a;font-weight:bold;font-style:normal;">Calendar Week</div>
<div class="t" style="left:445px;top:794px;font-size:28px;line-height:28px;color:#32363a;font-weight:normal;font-style:normal;letter-spacing:-0.2px">CalendarWeek</div>
<svg class="b" style="left:730px;top:790px;" width="34" height="24" viewBox="0 0 34 24"><path d="M2.3,12 C6.5,5.6 11.3,3.2 17,3.2 C22.7,3.2 27.5,5.6 31.7,12 C27.5,18.4 22.7,20.8 17,20.8 C11.3,20.8 6.5,18.4 2.3,12 Z" fill="none" stroke="#0854a0" stroke-width="2.1"/><circle cx="17" cy="12" r="6" fill="#0854a0"/><circle cx="19.3" cy="9.2" r="1.5" fill="#fff"/></svg>
<svg class="b" style="left:828px;top:788px;" width="30" height="30" viewBox="0 0 30 30"><path d="M2.2,2 L27.8,2 L18.3,13.6 L18.3,21 L12.2,26.6 L12.2,13.6 Z" fill="none" stroke="#0854a0" stroke-width="2.2" stroke-linejoin="round"/></svg>
<svg class="b" style="left:922px;top:789px;" width="34" height="34" viewBox="0 0 34 34"><circle cx="17" cy="17" r="15.1" fill="none" stroke="#84a8d2" stroke-width="2.1"/><path d="M9.8,9.8 L24.2,24.2 M24.2,9.8 L9.8,24.2" stroke="#84a8d2" stroke-width="2.1"/></svg>
<div class="b" style="left:24px;top:904px;width:964px;height:2px;background:#e5e5e5"></div>
<div class="b" style="left:24px;top:840px;width:2px;height:66px;background:#e5e5e5"></div>
<div class="b" style="left:86px;top:840px;width:2px;height:66px;background:#e5e5e5"></div>
<div class="b" style="left:158px;top:840px;width:2px;height:66px;background:#e5e5e5"></div>
<div class="b" style="left:428px;top:840px;width:2px;height:66px;background:#e5e5e5"></div>
<div class="b" style="left:698px;top:840px;width:2px;height:66px;background:#e5e5e5"></div>
<div class="b" style="left:794px;top:840px;width:2px;height:66px;background:#e5e5e5"></div>
<div class="b" style="left:890px;top:840px;width:2px;height:66px;background:#e5e5e5"></div>
<svg class="b" style="left:99px;top:840.5999999999999px;" width="50" height="50" viewBox="0 0 50 50"><polygon points="9.1,20.2 24.7,11.2 24.7,16.5 13.5,22.9 13.5,30.7 9.1,33.6" fill="#32363a"/><polygon points="16.1,25 31.7,15.9 31.7,21 20.5,27.4 20.5,35.3 16.1,38" fill="#32363a"/><polygon points="23.1,29.3 38.8,20.2 38.8,33.5 23.1,42.6" fill="#32363a"/></svg>
<div class="t" style="left:175px;top:855px;font-size:32px;line-height:32px;color:#32363a;font-weight:bold;font-style:normal;">Calendar Year</div>
<div class="t" style="left:445px;top:861px;font-size:28px;line-height:28px;color:#32363a;font-weight:normal;font-style:normal;letter-spacing:-0.2px">CalendarYear</div>
<svg class="b" style="left:730px;top:856px;" width="34" height="24" viewBox="0 0 34 24"><path d="M2.3,12 C6.5,5.6 11.3,3.2 17,3.2 C22.7,3.2 27.5,5.6 31.7,12 C27.5,18.4 22.7,20.8 17,20.8 C11.3,20.8 6.5,18.4 2.3,12 Z" fill="none" stroke="#0854a0" stroke-width="2.1"/><circle cx="17" cy="12" r="6" fill="#0854a0"/><circle cx="19.3" cy="9.2" r="1.5" fill="#fff"/></svg>
<svg class="b" style="left:828px;top:854px;" width="30" height="30" viewBox="0 0 30 30"><path d="M2.2,2 L27.8,2 L18.3,13.6 L18.3,21 L12.2,26.6 L12.2,13.6 Z" fill="none" stroke="#0854a0" stroke-width="2.2" stroke-linejoin="round"/></svg>
<svg class="b" style="left:922px;top:855px;" width="34" height="34" viewBox="0 0 34 34"><circle cx="17" cy="17" r="15.1" fill="none" stroke="#84a8d2" stroke-width="2.1"/><path d="M9.8,9.8 L24.2,24.2 M24.2,9.8 L9.8,24.2" stroke="#84a8d2" stroke-width="2.1"/></svg>
<div class="b" style="left:24px;top:970px;width:964px;height:2px;background:#e5e5e5"></div>
<div class="b" style="left:24px;top:906px;width:2px;height:66px;background:#e5e5e5"></div>
<div class="b" style="left:86px;top:906px;width:2px;height:66px;background:#e5e5e5"></div>
<div class="b" style="left:158px;top:906px;width:2px;height:66px;background:#e5e5e5"></div>
<div class="b" style="left:428px;top:906px;width:2px;height:66px;background:#e5e5e5"></div>
<div class="b" style="left:698px;top:906px;width:2px;height:66px;background:#e5e5e5"></div>
<div class="b" style="left:794px;top:906px;width:2px;height:66px;background:#e5e5e5"></div>
<div class="b" style="left:890px;top:906px;width:2px;height:66px;background:#e5e5e5"></div>
<svg class="b" style="left:99px;top:906.5999999999999px;" width="50" height="50" viewBox="0 0 50 50"><polygon points="9.1,20.2 24.7,11.2 24.7,16.5 13.5,22.9 13.5,30.7 9.1,33.6" fill="#32363a"/><polygon points="16.1,25 31.7,15.9 31.7,21 20.5,27.4 20.5,35.3 16.1,38" fill="#32363a"/><polygon points="23.1,29.3 38.8,20.2 38.8,33.5 23.1,42.6" fill="#32363a"/></svg>
<div class="t" style="left:175px;top:921px;font-size:32px;line-height:32px;color:#32363a;font-weight:bold;font-style:normal;">Calendar Day</div>
<div class="t" style="left:445px;top:927px;font-size:28px;line-height:28px;color:#32363a;font-weight:normal;font-style:normal;letter-spacing:-0.2px">CalendarDay</div>
<svg class="b" style="left:730px;top:922px;" width="34" height="24" viewBox="0 0 34 24"><path d="M2.3,12 C6.5,5.6 11.3,3.2 17,3.2 C22.7,3.2 27.5,5.6 31.7,12 C27.5,18.4 22.7,20.8 17,20.8 C11.3,20.8 6.5,18.4 2.3,12 Z" fill="none" stroke="#0854a0" stroke-width="2.1"/><circle cx="17" cy="12" r="6" fill="#0854a0"/><circle cx="19.3" cy="9.2" r="1.5" fill="#fff"/></svg>
<svg class="b" style="left:828px;top:920px;" width="30" height="30" viewBox="0 0 30 30"><path d="M2.2,2 L27.8,2 L18.3,13.6 L18.3,21 L12.2,26.6 L12.2,13.6 Z" fill="none" stroke="#0854a0" stroke-width="2.2" stroke-linejoin="round"/></svg>
<svg class="b" style="left:922px;top:921px;" width="34" height="34" viewBox="0 0 34 34"><circle cx="17" cy="17" r="15.1" fill="none" stroke="#84a8d2" stroke-width="2.1"/><path d="M9.8,9.8 L24.2,24.2 M24.2,9.8 L9.8,24.2" stroke="#84a8d2" stroke-width="2.1"/></svg>
<div class="b" style="left:990px;top:0px;width:2px;height:924px;background:#e5e5e5"></div>
<div class="b" style="left:996px;top:0px;width:24px;height:299px;background:#949494"></div>
</div>
<div class="t" style="left:1154px;top:393px;font-size:36px;line-height:36px;color:#32363a;font-weight:normal;font-style:normal;letter-spacing:-0.22px">PO Net Amount (Measure)</div>
<div class="b" style="left:1124px;top:452px;width:1066px;height:2px;background:#d9d9d9"></div>
<div class="b" style="left:1124px;top:454px;width:1090px;height:1150px;background:#fff"></div>
<div class="b" style="left:2190px;top:366px;width:24px;height:966px;background:#949494"></div>
<div class="t" style="left:1186px;top:515px;font-size:28px;line-height:28px;color:#32363a;font-weight:bold;font-style:normal;">Properties</div>
<div class="t" style="left:1186px;top:595px;font-size:28px;line-height:28px;color:#6a6d70;font-weight:normal;font-style:normal;">Label:</div>
<div class="b" style="left:1188px;top:634px;width:954px;height:52px;background:#f8f8f8;border:2px solid #89919a;box-sizing:border-box"></div>
<div class="t" style="left:1204px;top:647px;font-size:28px;line-height:28px;color:#32363a;font-weight:normal;font-style:normal;">PO Net Amount</div>
<div class="t" style="left:1186px;top:715px;font-size:28px;line-height:28px;color:#6a6d70;font-weight:normal;font-style:normal;">Override Label:</div>
<div class="b" style="left:1188px;top:754px;width:954px;height:52px;background:#fbfbfb;border:2px solid #c9cbcd;border-radius:5px;box-sizing:border-box"></div>
<div class="t" style="left:1186px;top:835px;font-size:28px;line-height:28px;color:#6a6d70;font-weight:normal;font-style:normal;">Name:</div>
<div class="b" style="left:1188px;top:874px;width:954px;height:52px;background:#f8f8f8;border:2px solid #89919a;box-sizing:border-box"></div>
<div class="t" style="left:1204px;top:887px;font-size:28px;line-height:28px;color:#32363a;font-weight:normal;font-style:normal;letter-spacing:-0.2px">PurOrdNetAmountInDisplayCrcy</div>
<div class="t" style="left:1186px;top:955px;font-size:28px;line-height:28px;color:#6a6d70;font-weight:normal;font-style:normal;">Display:</div>
<svg class="b" style="left:1190px;top:1004px;" width="32" height="32" viewBox="0 0 32 32"><rect x="1" y="1" width="30" height="30" rx="4" fill="#fff" stroke="#c9cbcd" stroke-width="2"/><polyline points="8,15.5 13.5,21 23.5,9" fill="none" stroke="#bdbdbd" stroke-width="3"/></svg>
<div class="t" style="left:1186px;top:1075px;font-size:28px;line-height:28px;color:#6a6d70;font-weight:normal;font-style:normal;">Decimals:</div>
<div class="b" style="left:1188px;top:1114px;width:196px;height:52px;background:#fff;border:2px solid #c3c6ca;border-radius:5px;box-sizing:border-box"></div>
<div class="t" style="left:1205px;top:1127px;font-size:28px;line-height:28px;color:#9a9c9e;font-weight:normal;font-style:normal;">Default</div>
<svg class="b" style="left:1335px;top:1133px;" width="28" height="16" viewBox="0 0 28 16"><polyline points="3.6,2.6 14,12.6 24.4,2.6" fill="none" stroke="#7ea6d6" stroke-width="2.6" stroke-linecap="round" stroke-linejoin="round"/></svg>
<div class="t" style="left:1186px;top:1195px;font-size:28px;line-height:28px;color:#6a6d70;font-weight:normal;font-style:normal;">Scaling:</div>
<div class="b" style="left:1188px;top:1234px;width:196px;height:52px;background:#fff;border:2px solid #c3c6ca;border-radius:5px;box-sizing:border-box"></div>
<div class="t" style="left:1205px;top:1247px;font-size:28px;line-height:28px;color:#9a9c9e;font-weight:normal;font-style:normal;">Default</div>
<svg class="b" style="left:1335px;top:1253px;" width="28" height="16" viewBox="0 0 28 16"><polyline points="3.6,2.6 14,12.6 24.4,2.6" fill="none" stroke="#7ea6d6" stroke-width="2.6" stroke-linecap="round" stroke-linejoin="round"/></svg>
<div class="t" style="left:1186px;top:1315px;font-size:28px;line-height:28px;color:#6a6d70;font-weight:normal;font-style:normal;letter-spacing:-0.4px">Reverse Sign:</div>
<svg class="b" style="left:1190px;top:1364px;" width="32" height="32" viewBox="0 0 32 32"><rect x="1" y="1" width="30" height="30" rx="4" fill="#fff" stroke="#c9cbcd" stroke-width="2"/></svg>
<div class="t" style="left:1186px;top:1495px;font-size:28px;line-height:28px;color:#32363a;font-weight:bold;font-style:normal;">Hierarchy</div>
<div class="b" style="left:1124px;top:1540px;width:1000px;height:64px;overflow:hidden">
<div class="t" style="left:62px;top:35px;font-size:28px;line-height:28px;color:#6a6d70;font-weight:normal;font-style:normal;letter-spacing:-0.2px">Enable Hierarchy:</div>
</div>
<div class="b" style="left:0px;top:1636px;width:2240px;height:4px;background:#d6d6d6"></div>
<div class="b" style="left:0px;top:1640px;width:2240px;height:72px;background:linear-gradient(#fdfdfd,#f1f1f1)"></div>
<svg class="b" style="left:2180px;top:1662px;" width="36" height="36" viewBox="0 0 36 36"><g fill="none" stroke="#7ea3cf" stroke-width="1.3"><line x1="9.8" y1="5.9" x2="18.1" y2="18"/><line x1="26" y1="7.8" x2="18.1" y2="18"/><line x1="5.9" y1="18" x2="18.1" y2="18"/><line x1="18.1" y1="18" x2="18.1" y2="18"/><line x1="30" y1="18" x2="18.1" y2="18"/><line x1="9.8" y1="30" x2="18.1" y2="18"/><line x1="26" y1="28.1" x2="18.1" y2="18"/></g><rect x="6.800000000000001" y="2.9000000000000004" width="6" height="6" rx="1.4" fill="#fafafa" stroke="#7ea3cf" stroke-width="1.9"/><rect x="23.0" y="4.8" width="6" height="6" rx="1.4" fill="#fafafa" stroke="#7ea3cf" stroke-width="1.9"/><rect x="2.9000000000000004" y="15.0" width="6" height="6" rx="1.4" fill="#fafafa" stroke="#7ea3cf" stroke-width="1.9"/><rect x="15.100000000000001" y="15.0" width="6" height="6" rx="1.4" fill="#fafafa" stroke="#7ea3cf" stroke-width="1.9"/><rect x="27.0" y="15.0" width="6" height="6" rx="1.4" fill="#fafafa" stroke="#7ea3cf" stroke-width="1.9"/><rect x="6.800000000000001" y="27.0" width="6" height="6" rx="1.4" fill="#fafafa" stroke="#7ea3cf" stroke-width="1.9"/><rect x="23.0" y="25.1" width="6" height="6" rx="1.4" fill="#fafafa" stroke="#7ea3cf" stroke-width="1.9"/></svg>
</body></html>
